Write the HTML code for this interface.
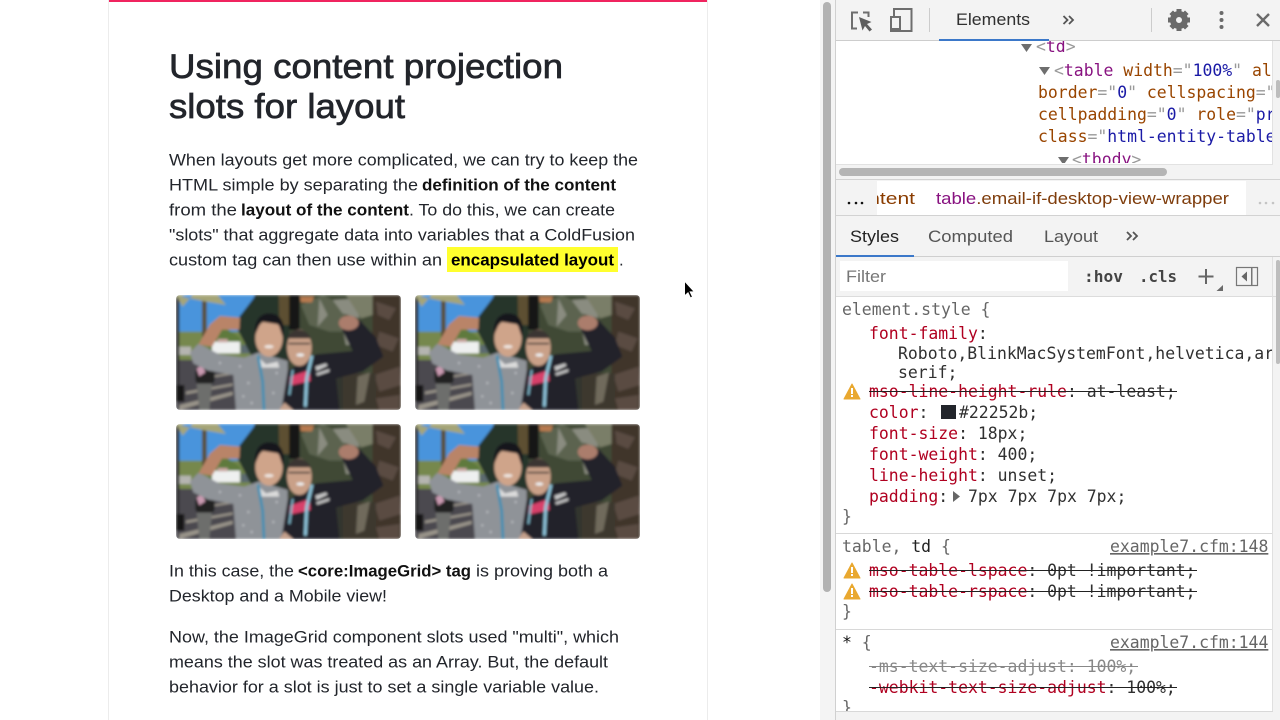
<!DOCTYPE html>
<html lang="en"><head><meta charset="utf-8"><title>Using content projection slots for layout</title>
<style>
html,body{margin:0;padding:0;background:#fff;width:1280px;height:720px;overflow:hidden}
svg{display:block;filter:blur(.3px)}
.r{font-family:"Liberation Sans",sans-serif;font-size:16.7px;fill:#22252b;transform:translateY(.5px)}
.b{font-weight:bold;fill:#111}
.h{font-family:"Liberation Sans",sans-serif;font-size:34px;fill:#22252b;stroke:#22252b;stroke-width:.7px}
.u{font-family:"Liberation Sans",sans-serif;font-size:16.6px;fill:#303030}
.m{font-family:"DejaVu Sans Mono","Liberation Mono",monospace;font-size:16.46px;fill:#303030;white-space:pre}
.pn{fill:#b00020}.gr{fill:#666}.tg{fill:#881280}.at{fill:#994500}.vl{fill:#1a1aa6}.pu{fill:#999}.dim{fill:#888}
.lnk{fill:#666;text-decoration:underline}
.ic{fill:none;stroke:#6e6e6e;stroke-width:2}
.st{stroke:#222;stroke-width:1.1}
</style></head><body>
<svg xmlns="http://www.w3.org/2000/svg" width="1280" height="720" viewBox="0 0 1280 720">
<defs>
<filter id="bl" x="-5%" y="-5%" width="110%" height="110%"><feGaussianBlur stdDeviation="4"/></filter>
<clipPath id="rc"><rect width="675" height="345" rx="12"/></clipPath>
<clipPath id="elc"><rect x="836" y="41" width="436" height="122"/></clipPath>
<clipPath id="stc"><rect x="836" y="297" width="436" height="414"/></clipPath>
<clipPath id="brc"><rect x="877" y="181" width="369" height="34"/></clipPath>
<symbol id="ph" viewBox="0 0 675 345" preserveAspectRatio="none"><g clip-path="url(#rc)"><g filter="url(#bl)">
<rect width="675" height="345" fill="#33342e"/>
<rect width="235" height="125" fill="#4a94dc"/>
<rect y="110" width="230" height="90" fill="#76884e"/>
<rect y="195" width="200" height="150" fill="#4b4a50"/>
<path d="M10 330L170 290V300L10 345ZM30 290L170 265V272L30 298ZM60 250L170 232V238L60 256Z" fill="#9a948a"/>
<rect width="10" height="320" fill="#2a2c2e"/>
<rect x="0" y="270" width="25" height="50" fill="#141416"/>
<rect x="78" y="15" width="14" height="110" fill="#5a5035"/>
<path d="M15 5L80 18L150 30L125 0H30ZM0 0H50L20 35Z" fill="#a5a578"/>
<path d="M95 130L140 95L190 125L215 175H100Z" fill="#5f7a3c"/>
<path d="M108 140H192V175H108Z" fill="#eef0f0"/><rect x="125" y="132" width="30" height="10" fill="#c9a6a0"/>
<rect x="10" y="155" width="35" height="25" fill="#b5b5b0"/>
<rect x="195" y="150" width="45" height="25" fill="#5c6a70"/>
<path d="M175 85L240 0H345V190H230Z" fill="#25352c"/>
<path d="M308 0H340V90H310Z" fill="#5d5030"/>
<rect x="340" width="250" height="240" fill="#3f4a36"/>
<path d="M375 30L440 0L500 30L520 110L460 110L400 90Z" fill="#5c6450"/>
<path d="M430 10L455 60L425 95ZM470 15L540 10L550 70L500 55ZM500 100L540 105L545 150L510 150Z" fill="#8a8c80"/>
<path d="M372 5H414L408 22H375Z" fill="#b87a50"/>
<path d="M510 0H590V60L555 70Z" fill="#7a7e68"/>
<rect x="339" width="32" height="105" fill="#141418"/>
<rect x="590" width="85" height="345" fill="#3f342c"/>
<path d="M600 20L660 40L640 75L605 60ZM610 110L668 130L650 170L600 150ZM595 240L670 215L675 270L610 290ZM600 310L670 300V345H610Z" fill="#5a4c42"/>
<rect x="500" y="235" width="100" height="110" fill="#3c372e"/>
<path d="M545 245L582 232L565 320L540 330Z" fill="#6f6a5c"/>
<rect x="58" y="218" width="58" height="50" rx="14" fill="#202024"/>
<path d="M62 266H108L100 345H70Z" fill="#6d6e6c"/>
<path d="M62 222L78 208L88 232L70 244Z" fill="#c99ab0"/>
<path d="M42 172L68 146L130 178L205 188L248 172L335 198L336 345H180L172 240L95 226L52 205Z" fill="#8f9398"/>
<path d="M190 210l6 4-6 4zM215 260l6 4-6 4zM200 300l6 4-6 4zM290 290l6 4-6 4zM300 230l6 4-6 4zM130 200l6 4-6 4zM225 320l6 4-6 4z" fill="#d0d2d6"/>
<path d="M68 148L102 88L132 63L192 68L190 104L138 104L108 155Z" fill="#b98468"/>
<ellipse cx="279" cy="130" rx="41" ry="55" fill="#cfa48a"/>
<path d="M238 118C232 70 260 52 285 56C315 58 330 85 320 125L308 88L255 80Z" fill="#17151a"/>
<ellipse cx="279" cy="155" rx="14" ry="5" fill="#efe6e0"/>
<path d="M240 180L270 208L305 200L310 218H255Z" fill="#dcdcdc"/>
<path d="M246 182L260 260L264 345" stroke="#3a8fb4" stroke-width="8" fill="none"/>
<path d="M316 345L335 228L420 178L530 168L498 104L552 76L600 128L622 185L560 230L480 250L490 345Z" fill="#22222a"/>
<ellipse cx="518" cy="84" rx="30" ry="22" fill="#ab7d6c"/>
<ellipse cx="370" cy="158" rx="37" ry="55" fill="#c9a088"/>
<path d="M335 130C340 100 390 92 404 130Z" fill="#3a3532"/>
<path d="M338 146H402" stroke="#26262a" stroke-width="5"/>
<ellipse cx="373" cy="180" rx="12" ry="5" fill="#eee"/>
<path d="M342 245L400 225L404 258L340 272Z" fill="#d83f6a"/>
<path d="M408 182L392 250L388 335" stroke="#8fc6dc" stroke-width="9" fill="none"/>
<path d="M350 225L340 300" stroke="#7fb5c8" stroke-width="6" fill="none"/>
<path d="M418 215L450 205L455 212L422 228ZM420 235L460 222L460 230L424 242Z" fill="#c8c8c8"/>
<path d="M310 345L325 322L352 345Z" fill="#c4a08c"/>
</g></g></symbol>
</defs>

<!-- page -->
<rect width="820" height="720" fill="#fff"/>
<rect x="108" width="1" height="720" fill="#ececec"/>
<rect x="707" width="1" height="720" fill="#ececec"/>
<rect x="109" width="598" height="2" fill="#f0245f"/>

<text class="h" x="169" y="78" textLength="394" lengthAdjust="spacingAndGlyphs">Using content projection</text>
<text class="h" x="169" y="118" textLength="236" lengthAdjust="spacingAndGlyphs">slots for layout</text>

<text class="r" x="169" y="165" textLength="469" lengthAdjust="spacingAndGlyphs">When layouts get more complicated, we can try to keep the</text>
<text class="r" x="169" y="190" textLength="249" lengthAdjust="spacingAndGlyphs">HTML simple by separating the</text>
<text class="r b" x="422" y="190" textLength="194" lengthAdjust="spacingAndGlyphs">definition of the content</text>
<text class="r" x="169" y="215" textLength="68" lengthAdjust="spacingAndGlyphs">from the</text>
<text class="r b" x="241" y="215" textLength="168" lengthAdjust="spacingAndGlyphs">layout of the content</text>
<text class="r" x="409" y="215" textLength="206" lengthAdjust="spacingAndGlyphs">. To do this, we can create</text>
<text class="r" x="169" y="240" textLength="466" lengthAdjust="spacingAndGlyphs">"slots" that aggregate data into variables that a ColdFusion</text>
<text class="r" x="169" y="265" textLength="273" lengthAdjust="spacingAndGlyphs">custom tag can then use within an</text>
<rect x="447" y="247" width="171" height="25" fill="#ffff2e"/>
<text class="r b" x="451" y="265" textLength="163" lengthAdjust="spacingAndGlyphs" style="fill:#000">encapsulated layout</text>
<text class="r" x="619" y="265">.</text>

<use href="#ph" x="176" y="295" width="225" height="115"/>
<use href="#ph" x="415" y="295" width="225" height="115"/>
<use href="#ph" x="176" y="424" width="225" height="115"/>
<use href="#ph" x="415" y="424" width="225" height="115"/>

<text class="r" x="169" y="576" textLength="125" lengthAdjust="spacingAndGlyphs">In this case, the</text>
<text class="r b" x="298" y="576" textLength="173" lengthAdjust="spacingAndGlyphs">&lt;core:ImageGrid&gt; tag</text>
<text class="r" x="476" y="576" textLength="132" lengthAdjust="spacingAndGlyphs">is proving both a</text>
<text class="r" x="169" y="601" textLength="218" lengthAdjust="spacingAndGlyphs">Desktop and a Mobile view!</text>
<text class="r" x="169" y="642" textLength="450" lengthAdjust="spacingAndGlyphs">Now, the ImageGrid component slots used "multi", which</text>
<text class="r" x="169" y="667" textLength="439" lengthAdjust="spacingAndGlyphs">means the slot was treated as an Array. But, the default</text>
<text class="r" x="169" y="692" textLength="430" lengthAdjust="spacingAndGlyphs">behavior for a slot is just to set a single variable value.</text>

<!-- cursor -->
<path d="M684.5 281V296L688 292.8L690.4 298L692.6 297L690.2 291.9H694.5Z" fill="#000" stroke="#fff" stroke-width="1"/>

<!-- page scrollbar -->
<rect x="820" width="15" height="720" fill="#f4f4f4"/>
<rect x="823" y="2" width="8" height="590" rx="4" fill="#b2b2b2"/>

<!-- devtools -->
<rect x="835" width="445" height="720" fill="#f3f3f3"/>
<rect x="835" width="1" height="720" fill="#d0d0d0"/>
<rect x="836" y="40" width="444" height="1" fill="#cdcdcd"/>
<rect x="939" y="39" width="110" height="2" fill="#3b78c9"/>

<path class="ic" d="M858 12.500H852V28.500H857M863 12.500H868.500V17" stroke-width="1.600"/>
<path d="M859 17L871.500 22L867 24L872 29.500L869.500 31.500L865 26L862.500 30.500Z" fill="#5f5f5f"/>
<rect x="894" y="9" width="17.500" height="22" class="ic" stroke-width="1.600"/>
<rect x="891" y="17" width="9" height="14" fill="#f3f3f3" stroke="#6e6e6e" stroke-width="2"/>
<rect x="891" y="28" width="9" height="4" fill="#6e6e6e"/>
<rect x="929" y="8" width="1" height="24" fill="#ccc"/>
<text class="u" x="956" y="25" textLength="74" lengthAdjust="spacingAndGlyphs">Elements</text>
<path d="M1063.500 16L1067.500 20L1063.500 24M1069 16L1073 20L1069 24" fill="none" stroke="#555" stroke-width="1.800"/>
<rect x="1151" y="8" width="1" height="24" fill="#ccc"/>
<g transform="translate(1179 20)">
<circle r="6" fill="none" stroke="#6a6a6a" stroke-width="6"/>
<path d="M-2.500-11H2.500V-7H-2.500ZM-2.500 7H2.500V11H-2.500ZM-11-2.500H-7V2.500H-11ZM7-2.500H11V2.500H7Z" fill="#6a6a6a"/>
<path d="M-2.500-11H2.500V-7H-2.500ZM-2.500 7H2.500V11H-2.500ZM-11-2.500H-7V2.500H-11ZM7-2.500H11V2.500H7Z" fill="#6a6a6a" transform="rotate(45)"/>
</g>
<circle cx="1221.500" cy="13" r="2" fill="#6a6a6a"/><circle cx="1221.500" cy="20" r="2" fill="#6a6a6a"/><circle cx="1221.500" cy="27" r="2" fill="#6a6a6a"/>
<path d="M1257 14L1269 26M1269 14L1257 26" stroke="#6a6a6a" stroke-width="2.400" fill="none"/>

<!-- elements pane -->
<rect x="836" y="41" width="436" height="123" fill="#fff"/>
<rect x="1272" y="41" width="1" height="124" fill="#e2e2e2"/>
<rect x="1276" y="80" width="4" height="18" rx="2" fill="#bdbdbd"/>
<g clip-path="url(#elc)">
<path d="M1021 44H1032L1026.500 52Z" fill="#6e6e6e"/>
<text class="m" x="1036" y="52"><tspan class="pu">&lt;</tspan><tspan class="tg">td</tspan><tspan class="pu">&gt;</tspan></text>
<path d="M1039 67H1050L1044.500 75Z" fill="#6e6e6e"/>
<text class="m" x="1054" y="76"><tspan class="pu">&lt;</tspan><tspan class="tg">table</tspan> <tspan class="at">width</tspan><tspan class="pu">="</tspan><tspan class="vl">100%</tspan><tspan class="pu">"</tspan> <tspan class="at">al</tspan></text>
<text class="m" x="1038" y="98"><tspan class="at">border</tspan><tspan class="pu">="</tspan><tspan class="vl">0</tspan><tspan class="pu">"</tspan> <tspan class="at">cellspacing</tspan><tspan class="pu">="</tspan></text>
<text class="m" x="1038" y="120"><tspan class="at">cellpadding</tspan><tspan class="pu">="</tspan><tspan class="vl">0</tspan><tspan class="pu">"</tspan> <tspan class="at">role</tspan><tspan class="pu">="</tspan><tspan class="vl">pr</tspan></text>
<text class="m" x="1038" y="142"><tspan class="at">class</tspan><tspan class="pu">="</tspan><tspan class="vl">html-entity-table</tspan></text>
<path d="M1058 157H1069L1063.500 165Z" fill="#6e6e6e"/>
<text class="m" x="1072" y="165"><tspan class="pu">&lt;</tspan><tspan class="tg">tbody</tspan><tspan class="pu">&gt;</tspan></text>
</g>
<rect x="836" y="164" width="437" height="1" fill="#e2e2e2"/>
<rect x="839" y="168" width="328" height="8" rx="4" fill="#b5b5b5"/>
<rect x="836" y="179" width="444" height="1" fill="#d2d2d2"/>

<!-- breadcrumb -->
<rect x="877" y="181" width="369" height="34" fill="#fff"/>
<g clip-path="url(#brc)">
<text class="u" x="846" y="204" style="fill:#8a3c00" textLength="69" lengthAdjust="spacingAndGlyphs">content</text>
</g>
<text class="u" x="936" y="204" textLength="293" lengthAdjust="spacingAndGlyphs"><tspan class="tg">table</tspan><tspan style="fill:#7f3d0c">.email-if-desktop-view-wrapper</tspan></text>
<circle cx="849" cy="203" r="1.300" fill="#111"/><circle cx="856" cy="203" r="1.300" fill="#111"/><circle cx="862" cy="203" r="1.300" fill="#111"/>
<circle cx="1260" cy="203" r="1.300" fill="#c4c4c4"/><circle cx="1266" cy="203" r="1.300" fill="#c4c4c4"/><circle cx="1273" cy="203" r="1.300" fill="#c4c4c4"/>
<rect x="836" y="215" width="444" height="1" fill="#d2d2d2"/>

<!-- tabs -->
<text class="u" x="850" y="242" textLength="49" lengthAdjust="spacingAndGlyphs" style="fill:#222">Styles</text>
<text class="u" x="928" y="242" textLength="85" lengthAdjust="spacingAndGlyphs" style="fill:#555">Computed</text>
<text class="u" x="1044" y="242" textLength="54" lengthAdjust="spacingAndGlyphs" style="fill:#555">Layout</text>
<path d="M1127 232L1131 236L1127 240M1133 232L1137 236L1133 240" fill="none" stroke="#555" stroke-width="1.800"/>
<rect x="836" y="256" width="444" height="1" fill="#cfcfcf"/>
<rect x="836" y="255" width="78" height="2" fill="#3b78c9"/>

<!-- filter -->
<rect x="840" y="261" width="228" height="30" fill="#fff"/>
<text class="u" x="846" y="282" textLength="40" lengthAdjust="spacingAndGlyphs" style="fill:#777">Filter</text>
<text class="m" x="1084" y="282" style="font-weight:bold;fill:#444;font-size:15.6px" textLength="39" lengthAdjust="spacingAndGlyphs">:hov</text>
<text class="m" x="1139" y="282" style="font-weight:bold;fill:#444;font-size:15.6px" textLength="38" lengthAdjust="spacingAndGlyphs">.cls</text>
<path d="M1206 269V284M1198.500 276.500H1213.500" stroke="#666" stroke-width="2" fill="none"/>
<path d="M1223 285V291H1216.500Z" fill="#6a6a6a"/>
<rect x="1236.500" y="267.500" width="21" height="18" fill="none" stroke="#777" stroke-width="1.200"/>
<rect x="1251" y="268" width="1.500" height="17" fill="#777"/>
<path d="M1247 271.500V281.500L1241.500 276.500Z" fill="#666"/>

<!-- styles pane -->
<rect x="836" y="297" width="436" height="414" fill="#fff"/>
<rect x="836" y="296" width="444" height="1" fill="#dcdcdc"/>
<rect x="1272" y="257" width="1" height="455" fill="#e0e0e0"/>
<rect x="1276" y="260" width="4" height="104" rx="2" fill="#bdbdbd"/>
<rect x="836" y="533" width="436" height="1" fill="#d8d8d8"/>
<rect x="836" y="629" width="436" height="1" fill="#d8d8d8"/>
<rect x="836" y="711" width="437" height="1" fill="#d8d8d8"/>

<g clip-path="url(#stc)">
<text class="m gr" x="842" y="315">element.style {</text>
<text class="m" x="869" y="339"><tspan class="pn">font-family</tspan>:</text>
<text class="m" x="898" y="359">Roboto,BlinkMacSystemFont,helvetica,ar</text>
<text class="m" x="898" y="378">serif;</text>
<text class="m" x="869" y="397"><tspan class="pn">mso-line-height-rule</tspan>: at-least;</text>
<line class="st" x1="869" y1="391.500" x2="1177" y2="391.500"/>
<text class="m" x="869" y="418"><tspan class="pn">color</tspan>:</text>
<rect x="941" y="405" width="15" height="14" fill="#22252b"/>
<text class="m" x="959" y="418">#22252b;</text>
<text class="m" x="869" y="439"><tspan class="pn">font-size</tspan>: 18px;</text>
<text class="m" x="869" y="460"><tspan class="pn">font-weight</tspan>: 400;</text>
<text class="m" x="869" y="481"><tspan class="pn">line-height</tspan>: unset;</text>
<text class="m" x="869" y="502"><tspan class="pn">padding</tspan>:</text>
<path d="M953 491V502L960 496.500Z" fill="#666"/>
<text class="m" x="968" y="502">7px 7px 7px 7px;</text>
<text class="m gr" x="842" y="522">}</text>

<text class="m" x="842" y="552"><tspan class="gr">table, </tspan><tspan fill="#222">td</tspan><tspan class="gr"> {</tspan></text>
<text class="m lnk" x="1110" y="552">example7.cfm:148</text>
<text class="m" x="869" y="576"><tspan class="pn">mso-table-lspace</tspan>: 0pt !important;</text>
<line class="st" x1="869" y1="570.500" x2="1197" y2="570.500"/>
<text class="m" x="869" y="597"><tspan class="pn">mso-table-rspace</tspan>: 0pt !important;</text>
<line class="st" x1="869" y1="591.500" x2="1197" y2="591.500"/>
<text class="m gr" x="842" y="617">}</text>

<text class="m" x="842" y="648"><tspan fill="#111">*</tspan><tspan class="gr"> {</tspan></text>
<text class="m lnk" x="1110" y="648">example7.cfm:144</text>
<text class="m dim" x="869" y="672">-ms-text-size-adjust: 100%;</text>
<line x1="869" y1="666.500" x2="1138" y2="666.500" stroke="#888" stroke-width="1.100"/>
<text class="m" x="869" y="693"><tspan class="pn">-webkit-text-size-adjust</tspan>: 100%;</text>
<line class="st" x1="869" y1="687.500" x2="1177" y2="687.500"/>
<text class="m gr" x="842" y="713">}</text>
</g>

<!-- warnings -->
<g id="w">
<path d="M852 384L860 399H844Z" fill="#e9a82f" stroke="#e9a82f" stroke-linejoin="round"/>
<rect x="851" y="388" width="2" height="6" fill="#fff"/><rect x="851" y="395" width="2" height="2" fill="#fff"/>
</g>
<use href="#w" y="179"/>
<use href="#w" y="200"/>
</svg>
</body></html>
